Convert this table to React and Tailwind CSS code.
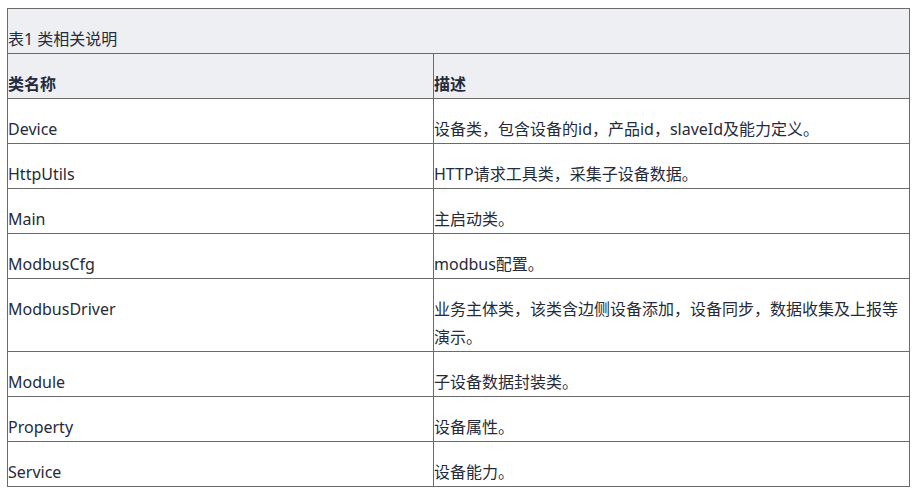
import React from 'react';

const rows = [
    { name: 'Device', desc: '设备类，包含设备的id，产品id，slaveId及能力定义。' },
    { name: 'HttpUtils', desc: 'HTTP请求工具类，采集子设备数据。' },
    { name: 'Main', desc: '主启动类。' },
    { name: 'ModbusCfg', desc: 'modbus配置。' },
    { name: 'ModbusDriver', desc: '业务主体类，该类含边侧设备添加，设备同步，数据收集及上报等演示。' },
    { name: 'Module', desc: '子设备数据封装类。' },
    { name: 'Property', desc: '设备属性。' },
    { name: 'Service', desc: '设备能力。' },
];

const cell = 'border border-[#6b6b6b] pt-[16px] pb-0 pl-0 pr-1 align-top text-left';

export default function App() {
    return (
        <div className="bg-white min-h-screen pt-[8px] pl-[7px] text-[16px] leading-[28px] text-[#252b3a]" style={{ fontFamily: '"Noto Sans", "Noto Sans CJK SC", sans-serif' }}>
            <table className="w-[903px] border-collapse table-fixed">
                <colgroup>
                    <col className="w-[426px]" />
                    <col />
                </colgroup>
                <thead>
                    <tr className="bg-[#eeeff3]">
                        <th colSpan={2} className={`${cell} font-normal`}>表1 类相关说明</th>
                    </tr>
                    <tr className="bg-[#eeeff3]">
                        <th className={`${cell} font-semibold`}>类名称</th>
                        <th className={`${cell} font-semibold`}>描述</th>
                    </tr>
                </thead>
                <tbody>
                    {rows.map(r => (
                        <tr key={r.name}>
                            <td className={cell}>{r.name}</td>
                            <td className={cell}>{r.desc}</td>
                        </tr>
                    ))}
                </tbody>
            </table>
        </div>
    );
}
